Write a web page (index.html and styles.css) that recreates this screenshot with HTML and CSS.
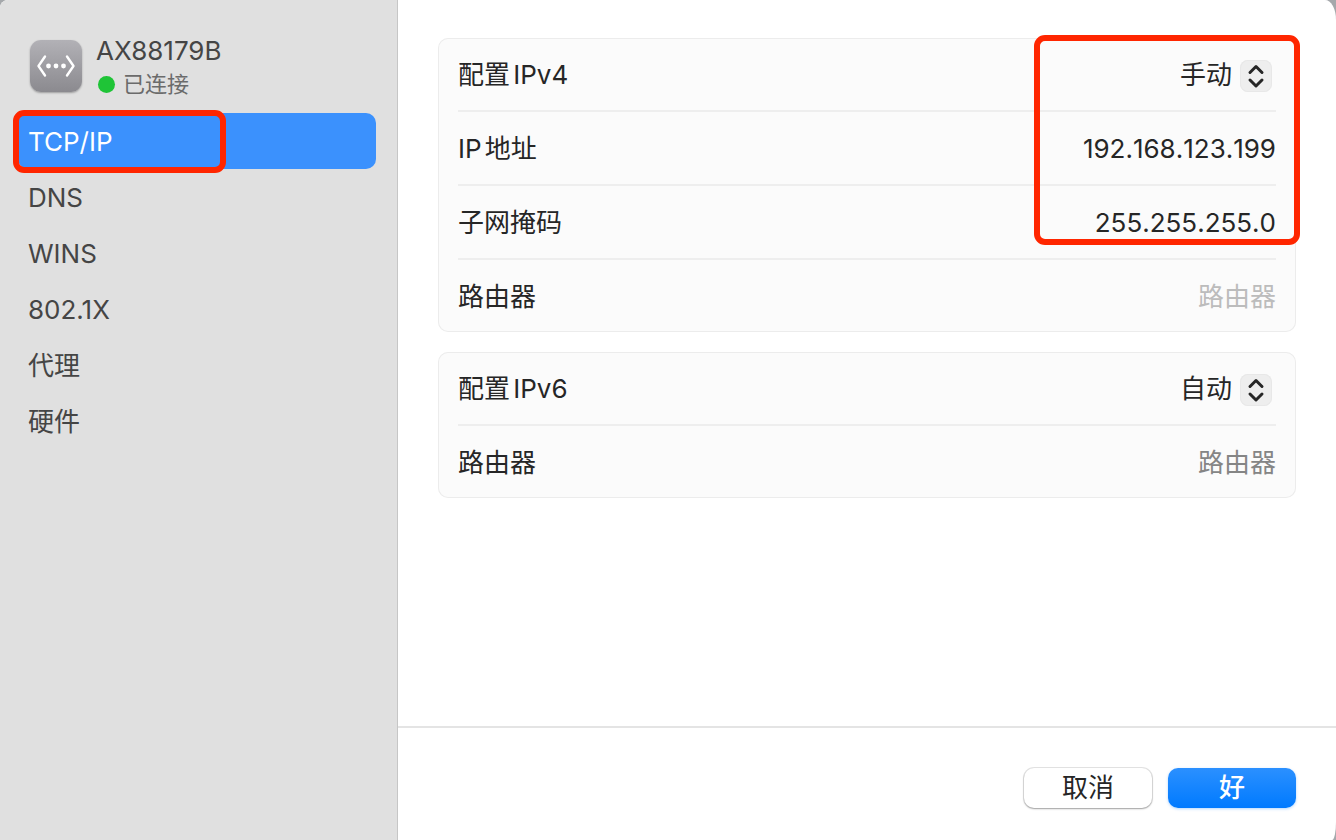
FILE: index.html
```html
<!DOCTYPE html>
<html lang="zh-CN">
<head>
  <meta charset="UTF-8" />
  <meta name="viewport" content="width=device-width, initial-scale=1.0" />
  <title>AX88179B</title>
  <link rel="stylesheet" href="styles.css">
</head>
<body>
  <div class="window">
    <aside class="sidebar">
      <div class="device">
        <svg class="device-icon" viewBox="0 0 52 52" aria-hidden="true">
          <path d="M15 16.500 L8.500 26 L15 35.500 M37 16.500 L43.500 26 L37 35.500" fill="none" stroke="#fff" stroke-width="2.400" stroke-linecap="round" stroke-linejoin="round" />
          <circle cx="18.500" cy="26" r="2.400" fill="#fff" />
          <circle cx="26" cy="26" r="2.400" fill="#fff" />
          <circle cx="33.500" cy="26" r="2.400" fill="#fff" />
        </svg>
        <div>
          <div class="device-name">AX88179B</div>
          <div class="device-status"><span class="dot"></span>已连接</div>
        </div>
      </div>
      <nav class="menu">
        <a href="#tcpip" class="active">TCP/IP<span class="mark mark-tab"></span></a>
        <a href="#dns">DNS</a>
        <a href="#wins">WINS</a>
        <a href="#8021x">802.1X</a>
        <a href="#proxy">代理</a>
        <a href="#hardware">硬件</a>
      </nav>
    </aside>

    <form class="content">
      <div class="settings">
        <section class="card">
          <div class="row">
            <label for="ipv4">配置IPv4</label>
            <div class="picker">
              <select id="ipv4">
                <option>手动</option>
              </select>
              <svg viewBox="0 0 32 32" aria-hidden="true"><path d="M10 12.500 L16 6.500 L22 12.500 M10 20 L16 26 L22 20" /></svg>
            </div>
          </div>
          <div class="row">
            <label for="ip">IP地址</label>
            <input type="text" id="ip" value="192.168.123.199" />
          </div>
          <div class="row">
            <label for="mask">子网掩码</label>
            <input type="text" id="mask" value="255.255.255.0" />
          </div>
          <div class="row">
            <label for="router4">路由器</label>
            <input type="text" id="router4" placeholder="路由器" />
          </div>
          <span class="mark mark-values"></span>
        </section>

        <section class="card">
          <div class="row">
            <label for="ipv6">配置IPv6</label>
            <div class="picker">
              <select id="ipv6">
                <option>自动</option>
              </select>
              <svg viewBox="0 0 32 32" aria-hidden="true"><path d="M10 12.500 L16 6.500 L22 12.500 M10 20 L16 26 L22 20" /></svg>
            </div>
          </div>
          <div class="row">
            <span>路由器</span>
            <span class="muted">路由器</span>
          </div>
        </section>
      </div>

      <footer class="actions">
        <button type="button">取消</button>
        <button type="submit" class="primary">好</button>
      </footer>
    </form>
  </div>
</body>
</html>
```
FILE: styles.css
```css
* {
  box-sizing: border-box;
}
body {
  margin: 0;
  font-family: Inter, "Noto Sans CJK SC", sans-serif;
  font-size: 26px;
  line-height: 36px;
  color: #262626;
  background: #a5a8ab;
  text-autospace: normal;
}
.window {
  display: flex;
  min-height: 100vh;
  border-radius: 8px 11px 4px 0 / 8px 20px 18px 0;
  overflow: hidden;
  background: #fff;
}

/* sidebar */
.sidebar {
  width: 398px;
  flex-shrink: 0;
  padding: 33px 21px 32px 18px;
  background: #e0e0e0;
  border-right: 1px solid #c6c6c6;
  color: #454545;
}
.device {
  display: flex;
  gap: 14px;
  padding: 0 12px;
  margin-bottom: 14px;
}
.device-icon {
  width: 52px;
  height: 52px;
  margin-top: 7px;
  border-radius: 11px;
  background: linear-gradient(#b2b1b6, #8b8a8f);
  box-shadow: 0 1px 2px rgba(0, 0, 0, 0.3);
}
.device-status {
  display: flex;
  align-items: center;
  gap: 8px;
  padding-left: 2px;
  font-size: 22px;
  line-height: 30px;
  color: #6b6b6b;
}
.dot {
  width: 17px;
  height: 17px;
  border-radius: 50%;
  background: #1fc437;
}
.menu a {
  display: block;
  position: relative;
  height: 56px;
  padding: 0 10px;
  line-height: 58px;
  color: inherit;
  text-decoration: none;
  border-radius: 10px;
}
.menu a.active {
  background: #3b91fd;
  color: #fff;
}

/* red highlight frames */
.mark {
  position: absolute;
  border: 6px solid #ff2600;
  border-radius: 11px;
  pointer-events: none;
}
.mark-tab {
  top: -3px;
  left: -5px;
  width: 213px;
  height: 63px;
}
.mark-values {
  top: -3px;
  right: -4px;
  width: 266px;
  height: 210px;
}

/* settings */
.content {
  flex: 1;
  min-width: 0;
  display: flex;
  flex-direction: column;
}
.settings {
  flex: 1;
  display: flex;
  flex-direction: column;
  gap: 20px;
  padding: 38px 40px;
}
.card {
  position: relative;
  padding: 0 20px;
  border-radius: 10px;
  background: #fbfbfb;
  box-shadow: inset 0 0 0 1px #ececec;
}
.row {
  display: flex;
  align-items: center;
  justify-content: space-between;
  height: 74px;
  padding-top: 2px;
  border-bottom: 2px solid #eee;
}
.row:nth-child(4),
.row:last-child {
  height: 72px;
  border-bottom: none;
}
.row input {
  flex: 1;
  min-width: 0;
  padding: 0;
  border: none;
  outline: none;
  background: none;
  font: inherit;
  font-kerning: none;
  color: inherit;
  text-align: right;
}
.row input::placeholder {
  color: #bcbcbc;
}
.muted {
  color: #858585;
}
.picker {
  position: relative;
  margin-right: 4px;
}
.picker select {
  appearance: none;
  padding: 0 39px 0 0;
  border: none;
  outline: none;
  background: none;
  font: inherit;
  color: inherit;
  display: block;
}
.picker svg {
  position: absolute;
  top: 3px;
  right: 0;
  width: 32px;
  height: 32px;
  border-radius: 8px;
  background: #eee;
  box-shadow: inset 0 0 0 1px #e8e8e8;
  pointer-events: none;
}
.picker path {
  fill: none;
  stroke: #262626;
  stroke-width: 3;
  stroke-linecap: round;
  stroke-linejoin: round;
}

/* bottom bar */
.actions {
  display: flex;
  justify-content: flex-end;
  gap: 16px;
  padding: 40px 40px 32px;
  border-top: 2px solid #e4e4e4;
}
.actions button {
  width: 128px;
  height: 40px;
  padding: 0;
  border: none;
  border-radius: 10px;
  background: #fff;
  font: inherit;
  color: #262626;
  box-shadow: 0 0 0 1px rgba(0, 0, 0, 0.1), 0 1px 2px rgba(0, 0, 0, 0.3);
}
.actions .primary {
  background: linear-gradient(#2b90ff, #007aff);
  font-weight: 500;
  color: #fff;
  box-shadow: 0 1px 3px rgba(0, 122, 255, 0.3);
}
```
